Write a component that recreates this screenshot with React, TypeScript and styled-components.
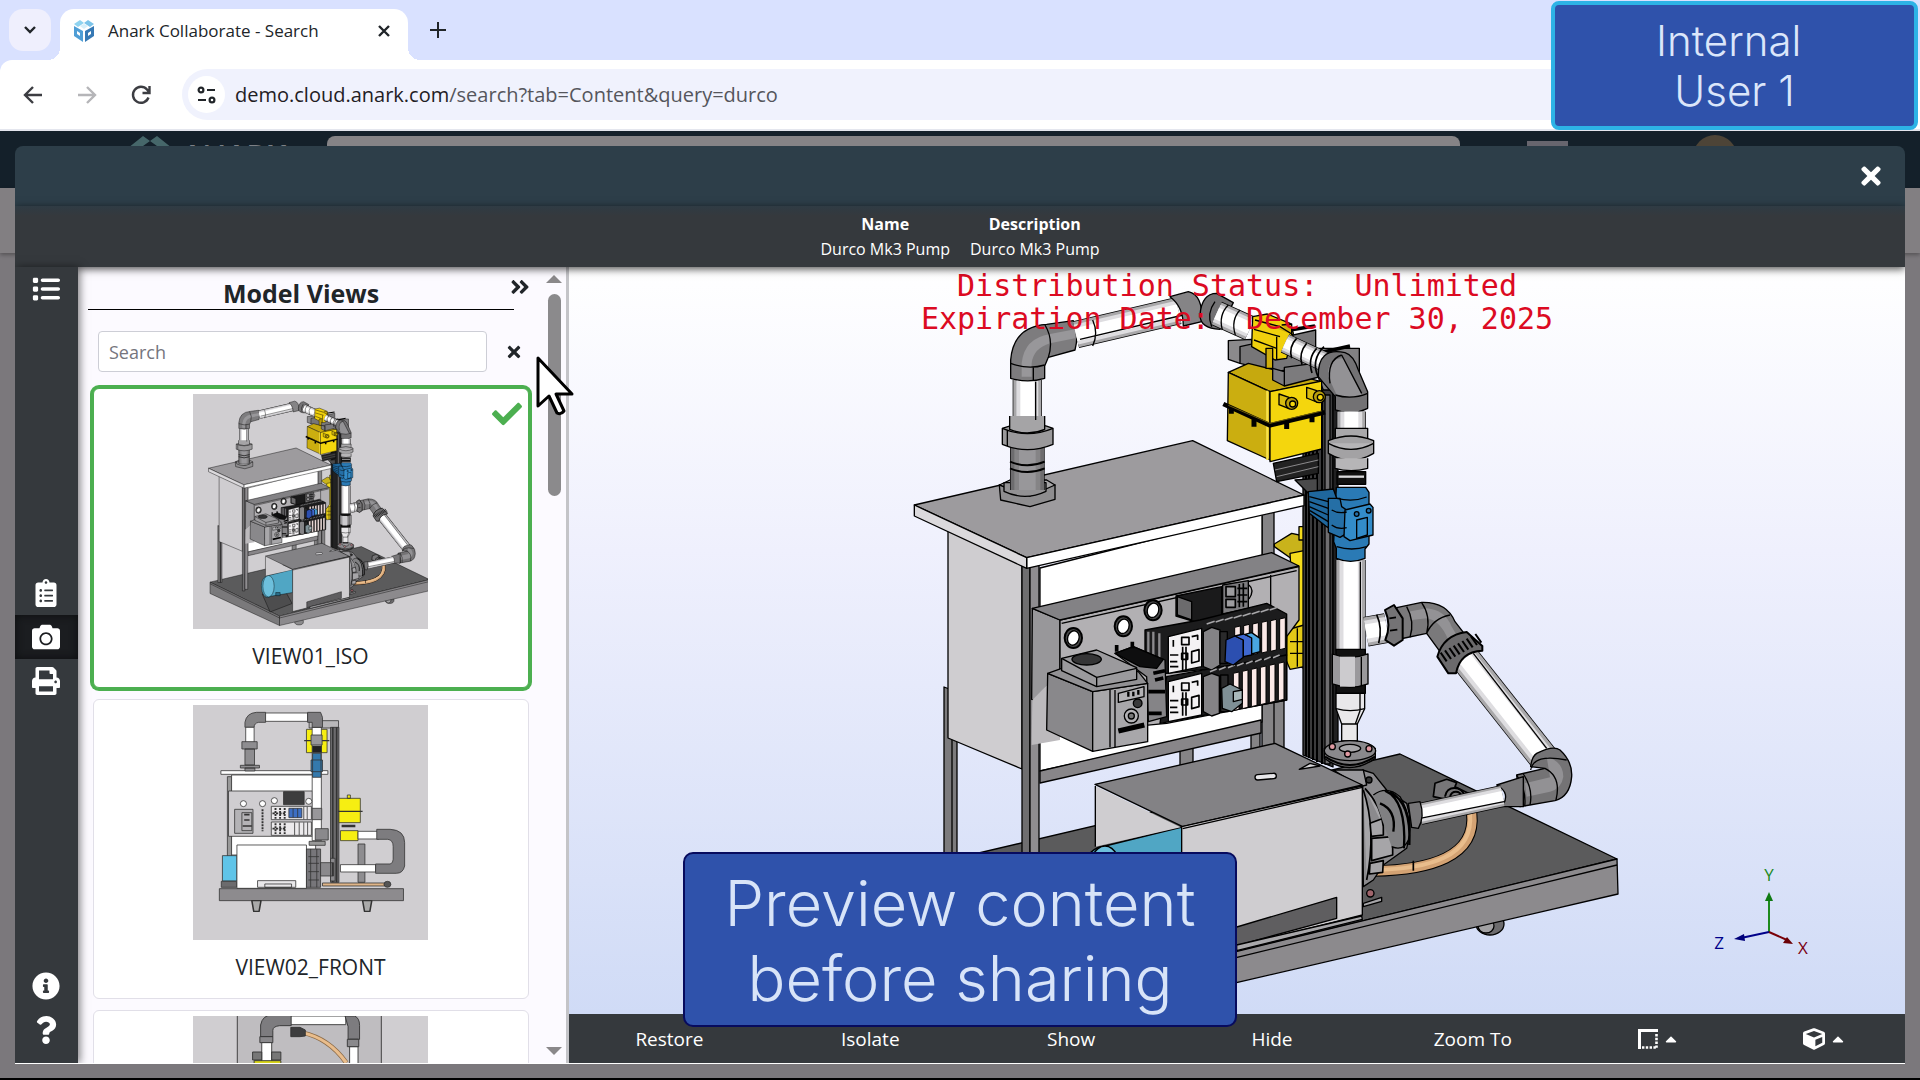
import React from "react";
import styled, { createGlobalStyle } from "styled-components";
import {
  FaAngleDoubleRight,
  FaCamera,
  FaCaretUp,
  FaCheck,
  FaClipboardList,
  FaCube,
  FaInfoCircle,
  FaPrint,
  FaQuestion,
  FaTimes,
} from "react-icons/fa";
import { FaList } from "react-icons/fa6";

const ui = `"Segoe UI", "Open Sans", "Noto Sans", sans-serif`;
const slate = "#35393d";

const Global = createGlobalStyle`
  *, *::before, *::after { box-sizing: border-box; }
  body { margin: 0; font-family: ${ui}; color: #212529; overflow: hidden; }
  button, input { font: inherit; color: inherit; }
  button { border: 0; padding: 0; background: none; cursor: pointer; }
  svg { display: block; flex: none; }
`;

/* ---------- browser chrome ---------- */

const Browser = styled.div`
  position: relative;
  display: flex;
  flex-direction: column;
  height: 100vh;
  background: #d9e1ff;
  border-bottom: 2px solid #000;
`;

const TabStrip = styled.div`
  display: flex;
  align-items: flex-start;
  height: 60px;
  padding: 9px 9px 0;
`;

const TabSearch = styled.button`
  display: grid;
  place-items: center;
  width: 42px;
  height: 42px;
  border-radius: 14px;
  background: #efeffd;
`;

const Tab = styled.div`
  position: relative;
  display: flex;
  align-items: center;
  gap: 13px;
  width: 348px;
  height: 51px;
  margin-left: 9px;
  padding: 0 17px 8px 13px;
  border-radius: 14px 14px 0 0;
  background: #fff;
  font-size: 17px;
  &::before, &::after {
    content: "";
    position: absolute;
    bottom: 0;
    width: 12px;
    height: 12px;
  }
  &::before { left: -12px; background: radial-gradient(circle at 0 0, transparent 12px, #fff 12px); }
  &::after { right: -12px; background: radial-gradient(circle at 100% 0, transparent 12px, #fff 12px); }
`;

const TabTitle = styled.span`
  flex: 1;
`;

const NewTab = styled.button`
  display: grid;
  place-items: center;
  width: 36px;
  height: 42px;
  margin-left: 12px;
`;

const Toolbar = styled.div`
  display: flex;
  align-items: center;
  height: 71px;
  padding: 0 20px;
  border-bottom: 2px solid #e4e6ee;
  border-radius: 12px 0 0 0;
  background: #fff;
`;

const NavButton = styled.button<{ $dim?: boolean }>`
  display: grid;
  place-items: center;
  width: 26px;
  height: 36px;
  margin-right: 28px;
  color: ${(p) => (p.$dim ? "#b5b5b8" : "#3c3d42")};
`;

const Omnibox = styled.div`
  display: flex;
  flex: 1;
  align-items: center;
  gap: 10px;
  height: 51px;
  padding: 0 6px;
  border-radius: 26px;
  background: #f0f2fd;
  font-size: 20px;
`;

const SiteInfo = styled.span`
  display: grid;
  place-items: center;
  width: 37px;
  height: 37px;
  border-radius: 50%;
  background: #fff;
`;

const Url = styled.span`
  color: #55565c;
  b { color: #1f2024; font-weight: 400; }
`;

/* ---------- dimmed page behind the dialog ---------- */

const Page = styled.div`
  position: relative;
  flex: 1;
  min-height: 0;
  overflow: hidden;
  background: #7b787c;
`;

const AppHeader = styled.div`
  display: grid;
  grid-template-columns: 327px minmax(0, 1133fr) 460fr;
  height: 57px;
  background: #14202a;
`;

const Brand = styled.div`
  display: flex;
  align-items: flex-start;
  gap: 10px;
  padding: 5px 0 0 128px;
  color: #7c8086;
  font: 700 30px/38px Lato, sans-serif;
  sup { font-size: 12px; line-height: 12px; vertical-align: 12px; }
`;

const AppSearch = styled.div`
  height: 46px;
  margin-top: 5px;
  border-radius: 8px;
  background: #858386;
`;

const AppActions = styled.div`
  display: flex;
  align-items: flex-start;
  gap: 125px;
  padding: 4px 0 0 67px;
`;

const ActionTile = styled.span`
  width: 41px;
  height: 30px;
  margin-top: 6px;
  background: #67656e;
`;

const Avatar = styled.span`
  width: 44px;
  height: 44px;
  border-radius: 50%;
  background: #4d4437;
`;

const SubHeader = styled.div`
  height: 65px;
  background: #827f82;
  box-shadow: 0 2px 4px rgba(0, 0, 0, 0.3);
`;

/* ---------- dialog ---------- */

const Dialog = styled.section`
  position: absolute;
  inset: 15px 15px 14px;
  display: flex;
  flex-direction: column;
  overflow: hidden;
  border-bottom: 1px solid #fff;
  border-radius: 8px 8px 0 0;
`;

const DialogTop = styled.header`
  display: flex;
  align-items: center;
  justify-content: flex-end;
  height: 60px;
  padding: 0 20px;
  background: #2d3e49;
`;

const CloseButton = styled.button`
  color: #fff;
  font-size: 28px;
`;

const InfoBar = styled.div`
  position: relative;
  z-index: 1;
  display: flex;
  justify-content: center;
  align-items: flex-start;
  height: 61px;
  padding-top: 6px;
  background: linear-gradient(#2f3b44, ${slate} 10px);
  box-shadow: 0 2px 8px rgba(0, 0, 0, 0.7);
`;

const InfoTable = styled.table`
  border-collapse: collapse;
  color: #fff;
  font-size: 16px;
  line-height: 25px;
  text-align: center;
  th, td { padding: 0 10px; }
`;

const Workspace = styled.div`
  display: flex;
  flex: 1;
  min-height: 0;
`;

const Rail = styled.nav`
  z-index: 1;
  display: flex;
  flex-direction: column;
  width: 63px;
  padding-bottom: 11px;
  background: ${slate};
  box-shadow: 2px 0 8px rgba(0, 0, 0, 0.5);
`;

const RailGroup = styled.div<{ $top?: string }>`
  display: flex;
  flex-direction: column;
  margin-top: ${(p) => p.$top ?? "0"};
`;

const RailButton = styled.button<{ $active?: boolean }>`
  display: grid;
  place-items: center;
  height: 44px;
  padding: 0 1px 1px 0;
  color: #fff;
  font-size: 28px;
  background: ${(p) => (p.$active ? "#1b1d20" : "transparent")};
  box-shadow: ${(p) => (p.$active ? "inset 0 0 8px #0c0d0f" : "none")};
`;

const Panel = styled.aside`
  display: grid;
  grid-template-columns: minmax(0, 1fr) 20px;
  width: 491px;
  overflow: hidden;
  border-right: 3px solid #c4c4c8;
  background: #fcfaff;
`;

const PanelBody = styled.div`
  min-width: 0;
  overflow: hidden;
  padding-left: 10px;
`;

const PanelHead = styled.div`
  display: flex;
  align-items: flex-start;
  height: 64px;
`;

const PanelTitle = styled.h2`
  width: 426px;
  height: 43px;
  margin: 0;
  border-bottom: 1px solid #000;
  font-size: 25px;
  font-weight: 700;
  line-height: 52px;
  text-align: center;
`;

const IconButton = styled.button`
  display: grid;
  place-items: center;
`;

const Collapse = styled(IconButton)`
  width: 17px;
  height: 40px;
  font-size: 22px;
  justify-content: end;
`;

const SearchRow = styled.div`
  display: flex;
  align-items: center;
  gap: 18px;
  padding-left: 10px;
`;

const SearchInput = styled.input`
  width: 389px;
  height: 41px;
  padding: 0 10px;
  border: 1px solid #cdced6;
  border-radius: 4px;
  background: #fff;
  font-size: 18px;
  outline: 0;
  &::placeholder { color: #75757d; opacity: 1; }
`;

const Cards = styled.div`
  display: flex;
  flex-direction: column;
  gap: 11px;
  padding: 16px 0 0 5px;
`;

const Card = styled.button<{ $selected?: boolean }>`
  position: relative;
  display: flex;
  flex: none;
  flex-direction: column;
  align-items: center;
  width: 436px;
  height: 300px;
  padding: 5px 1px 0 0;
  border: 1px solid ${(p) => (p.$selected ? "#4caf50" : "#e1dfe8")};
  border-radius: 6px;
  background: #fff;
  box-shadow: ${(p) => (p.$selected ? "0 0 0 3px #4caf50" : "none")};
`;

const Thumb = styled.span`
  width: 235px;
  height: 235px;
  overflow: hidden;
  background: #d0ced1;
`;

const CardLabel = styled.span`
  margin-top: 12px;
  font-size: 21px;
  line-height: 30px;
`;

const Tick = styled.span`
  position: absolute;
  top: 10px;
  right: 6px;
  color: #4caf50;
  font-size: 30px;
`;

const Scroll = styled.div`
  display: flex;
  flex-direction: column;
  align-items: center;
  padding: 8px 4px 8px 0;
`;

const Arrow = styled.i<{ $down?: boolean }>`
  border: solid transparent;
  border-width: ${(p) => (p.$down ? "8px 8px 0" : "0 8px 8px")};
  border-${(p) => (p.$down ? "top" : "bottom")}-color: #8a888a;
`;

const ScrollThumb = styled.div`
  width: 13px;
  height: 202px;
  margin: 11px 0 auto;
  border-radius: 7px;
  background: #8b8a8c;
`;

const Viewer = styled.main`
  display: flex;
  flex: 1;
  flex-direction: column;
  min-width: 0;
`;

const Canvas = styled.div`
  position: relative;
  flex: 1;
  min-height: 0;
  overflow: hidden;
  background: linear-gradient(#fff, #eff0fd 38%, #d0dbf6);
  > svg { width: 100%; height: 100%; }
`;

const Watermark = styled.p`
  position: absolute;
  inset: 2px 0 auto;
  margin: 0;
  color: #dc0a22;
  font: 30px/33px "DejaVu Sans Mono", monospace;
  text-align: center;
  white-space: pre;
`;

const ActionBar = styled.div`
  display: grid;
  grid-template-columns: repeat(5, 201fr) repeat(2, 166fr);
  height: 49px;
  background: ${slate};
`;

const Action = styled.button`
  display: flex;
  align-items: center;
  justify-content: center;
  gap: 4px;
  color: #fff;
  font-size: 19px;
`;

const MenuAction = styled(Action)`
  padding-left: 6px;
`;

/* ---------- overlays ---------- */

const Caption = styled.div`
  position: absolute;
  bottom: 51px;
  left: 50%;
  width: 554px;
  height: 175px;
  padding: 12px 0;
  transform: translateX(-50%);
  border: 2px solid #070b5e;
  border-radius: 10px;
  background: #2f52ab;
  color: #d8e4f8;
  font: 300 63px/75px Inter, sans-serif;
  text-align: center;
  white-space: pre;
`;

const UserBadge = styled.div`
  position: absolute;
  top: 1px;
  right: 2px;
  width: 367px;
  height: 129px;
  padding-top: 11px;
  border: 4px solid #2db3e6;
  border-radius: 8px;
  background: #2f52ab;
  color: #dbe6fa;
  font: 300 42px/50px Inter, sans-serif;
  text-align: center;
  white-space: pre;
`;

const Pointer = styled.svg`
  position: absolute;
  top: 354px;
  left: 534px;
`;

/* ---------- drawings ---------- */

type PipeProps = { d: string; w: number; dark?: boolean };

/* A shaded tube: outline, body, highlight. */
const Pipe = ({ d, w, dark }: PipeProps) => (
  <g fill="none" strokeLinejoin="round">
    <path d={d} stroke="#000" strokeWidth={w + 4} />
    <path d={d} stroke={dark ? "#6d6c6e" : "#a9a8aa"} strokeWidth={w} />
    <path d={d} stroke={dark ? "#858486" : "#dedde0"} strokeWidth={w * 0.78} />
    <path d={d} stroke={dark ? "#98979a" : "#fff"} strokeWidth={w * 0.5} />
  </g>
);

const range = (n: number) => Array.from({ length: n }, (_, i) => i);

const PumpModel = () => (
  <g stroke="#000" strokeWidth="1.3" strokeLinejoin="round">
    {/* skid */}
    <ellipse cx="1490" cy="924" rx="14" ry="11" fill="#6c6b6d" />
    <ellipse cx="1486" cy="926" rx="8" ry="7" fill="#a2a1a3" />
    <ellipse cx="1202" cy="993" rx="14" ry="10" fill="#8c8b8d" />
    <path d="M919 867 1400 754 1617 859 1140 975z" fill="#5b5b5c" />
    <path d="M1140 975 1617 859 1618 894 1140 1005z" fill="#8c8a8d" />
    <path d="M919 867 1140 975V1005L919 903z" fill="#7a797b" />
    <path d="M1140 981 1617 865M919 872 1140 981" fill="none" />

    {/* hose and end fitting */}
    <g transform="translate(1200 540) scale(.33333)" fill="none">
      <path d="M520 993C690 990 830 950 815 820" stroke="#000" strokeWidth="34" />
      <path d="M520 993C690 990 830 950 815 820" stroke="#d3a273" strokeWidth="28" />
      <path d="M520 990C690 987 822 950 810 820" stroke="#e9bd8c" strokeWidth="12" />
      <path d="M640 962v30M700 770l5-40 35-12 30 10-5 12 40 20-10 30z" fill="#777678" strokeWidth="5" />
      <path d="M735 770c5-35 50-35 60 0M750 770c5-20 30-20 36 0" strokeWidth="6" />
    </g>

    {/* cabinet frame and faces */}
    <path d="M944 687 952 690V868H944zM952 735h5v133h-5z" fill="#7c7b7d" />
    <path d="M1180 745h13v35h-13zM1251 730h9v30h-9zM1262 510h12v260h-12zM1274 690h10v80h-10z" fill="#858486" />
    <path d="M948 530V738L1022 769V562z" fill="#cfcdd0" />
    <path d="M1040 568 1262 512V722L1040 771z" fill="#fff" />
    <path d="M1040 771 1261 720V733L1040 783z" fill="#888689" />
    <path d="M1022 565h8V895h-8z" fill="#6f6e70" />
    <path d="M1030 565h9V890h-9z" fill="#8f8d90" />

    {/* rear yellow actuator */}
    <g transform="translate(1180 280) scale(.33333)" strokeWidth="4">
      <path d="M283 792 335 760 372 768V1165L340 1150V840L283 800z" fill="#c9b31b" />
      <path d="M330 820 372 812V1160L345 1160 345 1090z" fill="#f5dc1c" />
      <path d="M320 1050 372 1035V1160L330 1168 318 1140z" fill="#e3c917" />
      <path d="M357 740h18v40h-18zM330 1085h42M330 1120h42M352 1045v115" fill="#f5dc1c" />
    </g>

    {/* support extrusions */}
    <path d="M1303 385H1333V767L1303 755z" fill="#3b3b3c" />
    <path d="M1306 385V756M1309 385V758M1313 385V760M1317 385V762M1322 390V764" strokeWidth="2" />
    <path d="M1325 395h5v369h-5z" fill="#6f6e70" />
    <path d="M1333 385h5V742h-5z" fill="#202021" />

    {/* counter top */}
    <g transform="translate(900 260) scale(.33333)" strokeWidth="4">
      <path d="M43 735 878 542 1212 705 380 893z" fill="#9d9b9e" />
      <path d="M380 893 1212 705V737L380 925z" fill="#fff" />
      <path d="M43 735 380 893V925L43 768z" fill="#dbd9dc" />
    </g>

    {/* riser on the counter */}
    <g transform="translate(900 260) scale(.33333)" strokeWidth="4">
      <path d="M298 675 302 720 390 740 465 718V675z" fill="#8e8d8f" />
      <path d="M298 675 330 660H440L465 675 390 708z" fill="#a7a6a8" />
      <path d="M312 668h126v26q-63 30-126 0z" fill="#929193" />
      <Pipe d="M382 560V690" w={100} dark />
      <path d="M330 605q52 22 104 0M330 625q52 22 104 0" fill="none" strokeWidth="6" />
      <path d="M307 505v48q75 32 152 0v-48q-76-30-152 0z" fill="#9a999b" />
      <path d="M307 505q75 32 152 0M322 512v46" fill="none" />
      <Pipe d="M382 360V485" w={84} />
      <path d="M329 468v40q53 22 105 0v-40" fill="#a5a4a6" />
      <path d="M407 365V480" fill="none" />
      <path d="M332 355V300Q340 200 440 193L520 182Q538 220 525 270L445 292 434 318V355Q384 370 332 355z" fill="#7d7c7e" />
      <path d="M365 350V310Q372 235 450 222L525 208V235L450 250Q400 265 395 310V350z" fill="#98979a" stroke="none" />
      <path d="M332 310Q384 330 434 315M435 195Q462 240 445 292M400 360V320" fill="none" />
      <Pipe d="M528 224 835 152" w={78} />
      <path d="M540 238 850 165M578 180q18 40 0 78" fill="none" />
      <path d="M810 110 865 95Q910 105 905 185L850 198Q850 140 810 110z" fill="#858486" />
      <path d="M900 165Q905 100 950 100L1000 128 960 208Q900 205 900 165z" fill="#737274" />
      <Pipe d="M950 160 1050 205" w={72} />
      <path d="M985 135q-30 30-18 75M1020 150q-28 30-14 75M945 125q-26 35-10 75" fill="none" />
    </g>

    {/* upper valve, bracket and yellow actuator */}
    <g transform="translate(1180 280) scale(.33333)" strokeWidth="4">
      <path d="M145 182 215 178V205L180 250 145 238z" fill="#8b8a8c" />
      <path d="M180 200 407 150V260L280 275 180 250z" fill="#777678" />
      <path d="M380 205 538 205V330L430 330z" fill="#828183" />
      <path d="M330 150 405 138M390 225 510 198" strokeWidth="10" />
      <path d="M145 277 205 250 425 305 270 335z" fill="#c6a90e" />
      <path d="M145 277 270 335V540L142 482z" fill="#cbae10" />
      <path d="M270 335 425 303V507L270 545z" fill="#f4d60d" />
      <path d="M262 332V540" stroke="#f9e24a" strokeWidth="7" />
      <path d="M130 372 270 436 435 397" fill="none" strokeWidth="14" />
      <path d="M145 376 270 430 425 393" fill="none" stroke="#6a5a08" strokeWidth="3" />
      <path d="M154 385v16M222 418v22M320 425v22M396 405v22" strokeWidth="15" />
      {[[335, 370], [418, 350]].map(([x, y]) => (
        <g key={x}>
          <path d={`M${x - 38} ${y - 28}l30 10 v34l-30-12z`} fill="#d8bc10" />
          <circle cx={x} cy={y} r="18" fill="#b99e0c" />
          <circle cx={x + 3} cy={y + 2} r="9" fill="#f4d60d" />
        </g>
      ))}
      <path d="M278 265 313 275V318L278 300zM313 262 440 245V285L313 318z" fill="#7c7b7d" />
      <path d="M218 110 262 102 330 130 340 160 320 235 285 240 215 200z" fill="#f0d00d" />
      <path d="M225 120 300 140 340 165M222 148 300 170M222 180 290 205M290 170V240M305 135 335 132V165M258 205h20v60h-20z" fill="#cfae0c" />
      <Pipe d="M315 190 440 248" w={56} />
      <path d="M350 175q-25 25-15 60M380 190q-25 30-14 64M410 205q-28 30-14 74M432 200q-40 40-18 90" fill="none" strokeWidth="5" />
      <path d="M280 550 415 520V580L290 605z" fill="#222" />
      <path d="M285 570 415 540M290 590 415 560" stroke="#8b8a8c" strokeWidth="3" />
      <path d="M345 600 385 640 412 635V595z" fill="#4a4a4b" />
    </g>

    {/* main vertical line */}
    <g transform="translate(1180 280) scale(.33333)" strokeWidth="4">
      <path d="M415 290Q412 200 495 218 520 225 535 270L563 335V385Q515 408 466 390V350L440 320z" fill="#737274" />
      <path d="M445 290Q440 235 490 235L545 345Q515 355 470 345z" fill="#939295" stroke="none" />
      <path d="M485 225 545 340M466 345Q515 360 563 340M450 310Q440 240 485 225" fill="none" />
      <Pipe d="M514 395V460" w={84} />
      <path d="M466 445h97v40h-97z" fill="#a9a8aa" />
      <path d="M445 482v38q68 40 136 0v-38q-68-28-136 0z" fill="#a3a2a4" />
      <path d="M445 490q68 36 136 0M465 535v30q48 14 98 0v-30" fill="#b6b5b7" />
      <path d="M471 575h86v38h-86z" fill="#111" />
      <path d="M476 590h76" stroke="#d9d9db" strokeWidth="7" />
      <Pipe d="M512 840V1112" w={86} />
      <path d="M541 845V1110" fill="none" />
      <path d="M469 622h88l10 15v155l-12 15v28q-43 18-86 0v-30l-8-20z" fill="#2a7ab5" />
      <path d="M385 635 460 627 470 655V760L440 740 388 700z" fill="#1f679d" />
      <path d="M388 650 445 665M388 665 445 685M388 680 445 705M390 692 445 725" fill="none" />
      <path d="M445 655h35l5 25 15 10v70l-20 12-35-15z" fill="#256fa6" />
      <path d="M495 690 570 672 579 682V765L510 782 492 770z" fill="#338cc9" />
      <path d="M530 720 562 712V765L530 775zM455 690q20 12 45 6M455 735q20 15 45 8M470 655q50 12 90-4M470 800q45 14 90 0" fill="none" />
      <circle cx="530" cy="702" r="7" fill="#256fa6" />
      <circle cx="566" cy="692" r="7" fill="#256fa6" />
    </g>

    {/* control panel */}
    <g transform="translate(900 540) scale(.33333)" strokeWidth="4">
      <path d="M397 205 480 240V395L405 480 395 478z" fill="#98979a" />
      <path d="M397 480 480 395V600L395 615z" fill="#bcbabd" stroke="none" />
      <path d="M480 240 1197 80V240L1160 290V480L800 550 480 580z" fill="#b2b0b3" />
      <path d="M397 205 1115 38 1197 78 480 240z" fill="#838285" />
      <path d="M485 250 1190 92M1112 105V200" fill="none" />
      {[[520, 294], [670, 259], [759, 211]].map(([x, y]) => (
        <g key={x}>
          <ellipse cx={x} cy={y} rx="26" ry="30" fill="#4a4a4b" strokeWidth="6" />
          <ellipse cx={x} cy={y} rx="17" ry="22" fill="#fff" transform={`rotate(18 ${x} ${y})`} />
        </g>
      ))}
      <path d="M828 168 965 140V250H900L828 228z" fill="#1a1a1b" />
      <path d="M832 170 875 185V240L832 225z" fill="#6c6b6d" />
      <path d="M968 135 1045 122V205L968 222z" fill="#7e7d80" />
      <path d="M978 140h28v30h-28zM978 178h28v24h-28zM1018 132v70M1030 130v70M1012 145h30M1012 165h30M1012 185h30" fill="#9d9c9f" strokeWidth="5" />
      <path d="M1047 135q18 15 0 42" fill="none" />
      {/* terminal rows */}
      <path d="M735 270 900 240 1100 190 1160 222V345L1080 370 800 400 735 380z" fill="#1c1c1d" />
      <path d="M800 410 1160 345V480L780 550z" fill="#1c1c1d" />
      <path d="M745 275v75M760 275v80M778 280v90" stroke="#8c8b8e" strokeWidth="7" />
      <path d="M805 290 905 265V380L805 400zM805 425 905 400V525L805 545z" fill="#f4f2f4" />
      {range(2).map((r) => (
        <g key={r} transform={`translate(0 ${r * 137})`} strokeWidth="5">
          <path d="M820 300v20M845 292h22v22h-22zM845 340h18v18h-18zM875 290l18-4v14M875 335l22-6v34l-22 6zM810 345h25M810 365h22M810 380h25M848 320v70M858 320v70" fill="none" />
        </g>
      ))}
      <path d="M910 275 935 262 960 270V375L935 390 910 380zM910 410 935 400 958 408V520L935 528 910 515z" fill="#848386" />
      <path d="M960 275h22v95h-22zM962 405h22v110h-22z" fill="#2a2a2b" />
      {range(6).map((i) => (
        <g key={i} fill="#fbe9e7" strokeWidth="3">
          <path d={`M${1004 + i * 27} ${262 - i * 5}l17-4v${92}l-17 4z`} />
          <path d={`M${1000 + i * 27} ${400 - i * 6}l17-4v${112}l-17 4z`} />
        </g>
      ))}
      {range(8).map((i) => (
        <path key={i} d={`M${920 + i * 27} ${252 - i * 6}l24-8M${930 + i * 27} ${395 - i * 6}l20-8`} stroke="#a7a6a9" strokeWidth="5" />
      ))}
      <path d="M978 300 1005 288 1030 300V352L1000 375 975 365z" fill="#2c4fb0" />
      <path d="M1005 288 1030 282 1055 292V345L1030 350V300z" fill="#3f68d0" />
      <path d="M1035 283 1055 278 1080 295V335L1055 342V294z" fill="#49a5e0" />
      <path d="M965 445 990 432 1027 450V490L995 515 967 505z" fill="#7f9096" />
      <path d="M1000 455 1027 450V478L1000 485z" fill="#a9b9bb" />
      {/* breakers */}
      <path d="M645 340 700 320 795 360 800 530 745 545 740 410z" fill="#858487" />
      <path d="M645 340 700 320 790 358 770 385 720 380z" fill="#0e0e0f" />
      <path d="M650 315v20M697 305v20M745 455h50M745 520h40M760 400l35-8M765 420l25-6" fill="none" strokeWidth="11" />
      {/* isolator box */}
      <path d="M443 400 578 455V634L440 570z" fill="#89888b" />
      <path d="M578 455 743 430V605L645 622 578 634z" fill="#a8a7aa" />
      <path d="M443 400 485 385 715 395 743 430 578 455z" fill="#929194" />
      <path d="M485 355 590 330 710 383V418L590 440 485 392z" fill="#9b9a9d" />
      <path d="M485 355 590 412 710 385M590 412V440M630 450V622M645 450V622" fill="none" />
      <ellipse cx="560" cy="358" rx="44" ry="17" fill="#353536" />
      <path d="M655 460 732 440V470L655 487z" fill="#b3b2b5" />
      <path d="M685 470v-15M700 455v14M715 450v14" strokeWidth="7" />
      <circle cx="713" cy="490" r="13" fill="#39393a" />
      <circle cx="694" cy="528" r="21" fill="#b3b2b5" />
      <circle cx="694" cy="528" r="9" fill="#777" />
      <path d="M655 573 733 555" strokeWidth="16" />
    </g>

    {/* discharge branch */}
    <g transform="translate(1200 540) scale(.33333)" strokeWidth="4">
      <Pipe d="M498 275 560 264" w={86} />
      <path d="M590 203 665 187Q740 185 765 245L800 290 720 335 680 280 600 297z" fill="#7a797b" />
      <path d="M555 210 582 195 608 235V300L582 317 556 300Q575 255 555 210z" fill="#747375" strokeWidth="6" />
      <path d="M568 235l20-3M570 272l22-3M530 224q18 40 6 86" fill="none" strokeWidth="5" />
      <path d="M625 215 680 205Q735 210 755 260L770 285 745 300Q720 240 680 235L635 240z" fill="#939295" stroke="none" />
      <path d="M620 200q25 45 10 92M665 188q28 40 15 92Q700 235 750 225" fill="none" />
      <Pipe d="M795 355 1032 655" w={86} />
      <path d="M820 340 1040 625" fill="none" />
      <path d="M712 350Q730 285 800 276L847 318V332Q780 335 768 400H745z" fill="#6b6a6c" strokeWidth="6" />
      {range(9).map((i) => (
        <path key={i} d={`M${722 + i * 13} ${338 - i * 7}l18 26`} strokeWidth="6" />
      ))}
      <path d="M1010 640Q1060 615 1080 630 1118 665 1115 710 1110 770 1065 782L960 800 950 705 1035 685 992 680Q995 650 1010 640z" fill="#747375" />
      <path d="M1040 650Q1090 665 1090 710 1085 745 1050 755L980 770 975 730 1050 712z" fill="#929194" stroke="none" />
      <path d="M992 690Q1000 640 1100 660M1035 685Q1085 710 1068 780M970 702q30 45 20 93M950 705q30 45 24 94" fill="none" />
      <path d="M890 735 970 710V800L905 800Q935 760 890 735z" fill="#777678" />
      <Pipe d="M660 822 908 768" w={62} />
      <path d="M660 835 912 785" fill="none" />
    </g>

    {/* reducer, flange and pump volute */}
    <g transform="translate(1200 540) scale(.33333)" strokeWidth="4">
      <path d="M408 328h88v32h-88zM408 435h88v25h-88z" fill="#111" />
      <path d="M397 342q53 20 107 0v90q-53 20-107 0z" fill="#9a999c" />
      <path d="M420 350h45v90h-45z" fill="#cccbce" stroke="none" />
      <path d="M484 350v88" />
      <path d="M408 460h86v46L472 552V605H425V552L408 506z" fill="#e9e8ea" />
      <path d="M408 506q43 12 86 0M425 552h47M480 462v50l-14 40" fill="none" />
      <path d="M425 603h48v12h-48z" fill="#111" />
      <path d="M488 690 520 700 560 750 620 790Q640 850 620 925L550 975 520 1020 490 1040z" fill="#8b8a8d" />
      <path d="M495 745Q545 800 550 860M490 750Q530 870 500 1020M510 850l40-15v50l-36 4zM515 895 578 890V945L515 962zM510 970l40-8-2 35-40 5z" fill="#a6a5a8" strokeWidth="5" />
      <path d="M520 765Q560 735 600 770 640 840 625 900 610 935 575 920" fill="#808082" />
      <path d="M555 752Q620 780 612 925M540 790q50 20 40 85M570 755Q635 790 628 915" fill="none" strokeWidth="7" />
      <path d="M625 790 660 785Q675 830 655 865L635 862z" fill="#777678" />
      <path d="M373 625v30q75 55 153 0v-30z" fill="#767577" />
      <ellipse cx="450" cy="632" rx="77" ry="30" fill="#8a898c" />
      <path d="M375 650q75 50 150 0" fill="none" strokeWidth="6" />
      <ellipse cx="450" cy="625" rx="32" ry="12" fill="#a7a6a9" />
      {[[397, 620], [443, 642], [507, 626]].map(([x, y]) => (
        <circle key={x} cx={x} cy={y} r="9" fill="#e09aa2" />
      ))}
      <path d="M400 690 490 690 500 735 480 740z" fill="#99989b" />
      <circle cx="507" cy="720" r="9" fill="#333" />
    </g>

    {/* motor guard and motor */}
    <path d="M1085 905 1150 880 1180 935 1110 962z" fill="#4d4d4e" />
    <path d="M1105 846C1080 848 1078 885 1088 905 1094 918 1106 918 1112 912L1182 900V827z" fill="#50a6c4" />
    <ellipse cx="1105" cy="880" rx="18" ry="34" fill="#6dbfdc" />
    <path d="M1128 900h14v10h-14z" fill="#2a6b86" />
    <g transform="translate(900 540) scale(.33333)" strokeWidth="4">
      <path d="M586 738V920L842 862z" fill="#cfcdd0" stroke="none" />
      <path d="M586 738V920" />
      <path d="M585 733 1125 610 1387 735 848 860z" fill="#838285" />
      <path d="M845 860 1387 738V1125L845 1262z" fill="#cfcdd0" />
      <path d="M848 866 1387 742" fill="none" />
      <path d="M980 1170 1310 1072V1135L980 1225z" fill="#5f5e60" />
      <rect x="1065" y="702" width="64" height="16" rx="8" fill="#e8e7ea" transform="rotate(-5 1097 710)" />
      <path d="M1198 688 1230 670 1260 678z" fill="#d8d7da" />
      <path d="M1390 1090 1445 1072V1084L1390 1100z" fill="#a5a4a7" />
      <circle cx="1411" cy="1060" r="11" fill="#a0656c" />
      <path d="M1010 1215 1385 1128 1387 1138 1010 1232z" fill="#a9a8ab" />
    </g>
  </g>
);

const AxisTriad = () => (
  <g fontFamily="Open Sans, sans-serif" fontSize="17" textAnchor="middle">
    <path d="M1769 932V900" stroke="#1d8a1d" strokeWidth="2" />
    <path d="m1769 892 4 9h-8z" fill="#0f7a12" />
    <path d="m1769 932-28 6" stroke="#00008a" strokeWidth="2" />
    <path d="m1734 939 10-5 1 7z" fill="#00007a" />
    <path d="m1769 932 18 8" stroke="#7a0008" strokeWidth="2" />
    <path d="m1793 944-10-1 4-6z" fill="#6a0006" />
    <text x="1769" y="881" fill="#1d8a1d">Y</text>
    <text x="1719" y="949" fill="#00008a">Z</text>
    <text x="1803" y="954" fill="#7a0012">X</text>
  </g>
);

const FrontThumb = () => (
  <svg width="235" height="235" viewBox="0 0 235 235">
    <g transform="scale(.382 .3333) translate(-504 -75)" stroke="#333" strokeWidth="2.2" strokeLinejoin="round">
      <path d="M808 122h77v22h-77z" fill="#b9b8ba" />
      <path d="M864 142h22v465h-22z" fill="#6c6b6d" />
      <path d="M870 142v465M880 142v465" strokeWidth="4" />
      <path d="M594 290h11v240h-11z" fill="#999" />
      <path d="M605 285h220v240H605z" fill="#fff" />
      <path d="M577 272h280v11H577z" fill="#fff" />
      <path d="M597 333h220v136H597z" fill="#cfcdd0" />
      <path d="M640 142v-15q4-28 30-30h24v30h-18q-12 2-12 15z" fill="#858486" />
      <path d="M694 99h110v25H694z" fill="#fff" />
      <path d="M642 142h22v45h-22z" fill="#fff" />
      <path d="M632 185h40v22h-40zM640 207h25v48h-25zM628 256h50v8h-50zM640 264h26v9h-26z" fill="#8e8d90" />
      <path d="M801 148h54v70h-54zM886 355h56v73h-56zM908 345h8v10h-8zM890 452h46v30h-46z" fill="#f6ee12" />
      <path d="M795 182h66M884 394h64M893 436h36M893 440h36" strokeWidth="4" />
      <path d="M816 142h24v340h-24z" fill="#fff" />
      <path d="M804 97h34l5 15v30h-27v-15h-12z" fill="#7d7c7f" />
      <path d="M813 165h29v30h-29zM816 385h25v34h-25z" fill="#98979a" />
      <path d="M817 198h23v20h-23z" fill="#222" />
      <path d="M817 220h22v72h-22zM813 240h30v35h-30z" fill="#3479ac" />
      {[[636, 371], [686, 371], [717, 362], [807, 364]].map(([x, y]) => (
        <ellipse key={x} cx={x} cy={y} rx="8" ry="9" fill="#fff" />
      ))}
      <path d="M741 335h54v39h-54z" fill="#3d3d3e" />
      <path d="M709 379h105v40H709zM709 426h105v40H709z" fill="#eceaec" />
      <path d="M720 384v32M732 384v32M744 384v32M720 430v32M732 430v32M744 430v32M712 400h36M712 446h36M686 388v66" strokeWidth="5" strokeDasharray="6 3" />
      <path d="M755 385h34v28h-34z" fill="#3d6fc4" />
      <path d="M766 385v28M778 385v28M794 380v38M803 380v38M770 427v38M782 427v38M794 427v38M804 427v38" />
      <path d="M613 388h48v72h-48zM632 398h26v54h-26z" fill="#b4b3b6" />
      <path d="M638 404h14M638 420h14M634 438h24" strokeWidth="5" />
      <path d="M581 527h38v76h-38z" fill="#5fc4e8" />
      <path d="M578 604h40v18h-40z" fill="#6c6b6d" />
      <path d="M619 495h182v130H619z" fill="#fff" />
      <path d="M673 602h100v20H673zM692 612h70v10h-70z" fill="#e9e8ea" />
      <path d="M801 507h37v115h-37z" fill="#77767a" />
      <path d="M806 530h28M806 550h28M806 575h28M806 600h28M812 507v115M828 507v115M808 484h42v12h-42z" fill="#999" />
      <path d="M824 446h34v34h-34zM838 548h34v40h-34zM864 535v68h12v-68z" fill="#8a898c" />
      <path d="M936 492h18v115h-18z" fill="#8e8d90" />
      <path d="M936 454h55v23h-55zM890 554h92v22h-92z" fill="#fff" />
      <path d="M985 448h35q38 2 38 40v70q-4 22-22 22h-54v-28h38q8-2 8-14v-38q0-20-14-22h-29z" fill="#7d7c7f" />
      <path d="M843 609h162v9H843z" fill="#e0b588" />
      <circle cx="1013" cy="613" r="9" fill="#555" />
      <path d="M573 626h482v36H573z" fill="#8d8b8e" />
      <path d="M658 662h24l-5 32h-14zM948 662h24l-5 32h-14z" fill="#aaa" strokeWidth="4" />
    </g>
  </svg>
);

const RearThumb = () => (
  <svg width="235" height="235" viewBox="0 0 235 235">
    <g transform="scale(.382 .3333) translate(-504 -1008)" stroke="#333" strokeWidth="2.5">
      <path d="M620 1000h377v700H620z" fill="#bfbdc0" />
      <path d="M744 1008h160v26H744z" fill="#fff" />
      <path d="M681 1070v-35q5-30 30-30h50v32h-30q-18 2-18 14v19zM902 1008h25q13 6 13 28v42h-30v-38z" fill="#7d7c7f" />
      <path d="M679 1070h34v18h-34z" fill="#8a898c" />
      <path d="M684 1088h26v60h-26zM914 1078h22v200h-22zM914 1100h22" fill="#fff" />
      <path d="M908 1078h30v22h-30z" fill="#8a898c" />
      <path d="M660 1116h24v24h-24zM710 1116h24v24h-24z" fill="#777" />
      <path d="M664 1142h70v80h-70z" fill="#d8d418" />
      <path d="M790 1058Q860 1075 905 1148" fill="none" stroke="#8d6c48" strokeWidth="13" />
      <path d="M790 1058Q860 1075 905 1148" fill="none" stroke="#e9bd8c" strokeWidth="9" />
      <path d="M760 1042h24l14 8v18l-14 2h-24z" fill="#3d3d3e" />
    </g>
  </svg>
);

const CubeLogo = () => (
  <svg width="22" height="24" viewBox="0 0 22 24">
    <path d="M1 5 7 1l4 3-6 4z" fill="#8fd3f0" />
    <path d="m21 5-6-4-4 3 6 4z" fill="#7cc4ea" />
    <path d="M1 7l9 5v11l-9-6z" fill="#4f9ed6" />
    <path d="m21 7-9 5v11l9-6z" fill="#3679b5" />
    <path d="m4 12 3 2v3l-3-2zM18 12l-3 2v3l3-2z" fill="#fff" />
    <path d="m11 5 4 2-4 3-4-3z" fill="#d6effa" />
  </svg>
);

const BrandMark = () => (
  <svg width="44" height="44" viewBox="0 0 44 44">
    <path d="M0 12 15 0l7 5L8 15zM44 12 29 0l-7 5 14 10z" fill="#46676a" />
    <path d="M0 16 20 27v17L0 32zM44 16 24 27v17l20-12z" fill="#46676a" />
  </svg>
);

const line = { fill: "none", stroke: "currentColor", strokeWidth: 2.4 } as const;

const SelectIcon = () => (
  <svg width="20" height="20" viewBox="0 0 20 20" fill="none" stroke="#fff">
    <path d="M1.5 20V1.5H20" strokeWidth="3" />
    <path d="M18.5 5v14M4 18.5h15" strokeWidth="2.6" strokeDasharray="2.4 1.4" />
  </svg>
);

const actions = ["Restore", "Isolate", "Show", "Hide", "Zoom To"];

export default function App() {
  return (
    <Browser>
      <Global />
      <TabStrip>
        <TabSearch aria-label="Search tabs">
          <svg width="14" height="10" viewBox="0 0 14 10" {...line}><path d="m2 2 5 5 5-5" /></svg>
        </TabSearch>
        <Tab>
          <CubeLogo />
          <TabTitle>Anark Collaborate - Search</TabTitle>
          <IconButton aria-label="Close tab">
            <svg width="14" height="14" viewBox="0 0 14 14" {...line}><path d="m2 2 10 10M12 2 2 12" /></svg>
          </IconButton>
        </Tab>
        <NewTab aria-label="New tab">
          <svg width="16" height="16" viewBox="0 0 16 16" {...line} strokeWidth={2}><path d="M8 0v16M0 8h16" /></svg>
        </NewTab>
      </TabStrip>
      <Toolbar>
        <NavButton aria-label="Back">
          <svg width="20" height="18" viewBox="0 0 20 18" {...line}><path d="M19 9H3M10 1 2 9l8 8" /></svg>
        </NavButton>
        <NavButton $dim aria-label="Forward">
          <svg width="20" height="18" viewBox="0 0 20 18" {...line}><path d="M1 9h16M10 1l8 8-8 8" /></svg>
        </NavButton>
        <NavButton aria-label="Reload">
          <svg width="20" height="20" viewBox="0 0 20 20" {...line}>
            <path d="M17.5 12.500A8 8 0 1 1 16 4.500L18 7M18.500 1v7h-7" />
          </svg>
        </NavButton>
        <Omnibox>
          <SiteInfo>
            <svg width="20" height="18" viewBox="0 0 20 18" {...line} strokeWidth={2.2}>
              <circle cx="4" cy="4" r="2.400" /><path d="M10 4h8M1 14h8" /><circle cx="15" cy="14" r="2.400" />
            </svg>
          </SiteInfo>
          <Url><b>demo.cloud.anark.com</b>/search?tab=Content&amp;query=durco</Url>
        </Omnibox>
      </Toolbar>

      <Page>
        <AppHeader>
          <Brand><BrandMark /><span>ANARK<sup>®</sup></span></Brand>
          <AppSearch />
          <AppActions><ActionTile /><Avatar /></AppActions>
        </AppHeader>
        <SubHeader />

        <Dialog aria-label="Content preview">
          <DialogTop>
            <CloseButton aria-label="Close"><FaTimes /></CloseButton>
          </DialogTop>
          <InfoBar>
            <InfoTable>
              <thead><tr><th>Name</th><th>Description</th></tr></thead>
              <tbody><tr><td>Durco Mk3 Pump</td><td>Durco Mk3 Pump</td></tr></tbody>
            </InfoTable>
          </InfoBar>
          <Workspace>
            <Rail>
              <RailGroup>
                <RailButton aria-label="Tree"><FaList /></RailButton>
              </RailGroup>
              <RailGroup $top="260px">
                <RailButton aria-label="Properties"><FaClipboardList /></RailButton>
                <RailButton $active aria-label="Model views"><FaCamera /></RailButton>
                <RailButton aria-label="Print"><FaPrint /></RailButton>
              </RailGroup>
              <RailGroup $top="auto">
                <RailButton aria-label="Info"><FaInfoCircle /></RailButton>
                <RailButton aria-label="Help"><FaQuestion /></RailButton>
              </RailGroup>
            </Rail>

            <Panel>
              <PanelBody>
                <PanelHead>
                  <PanelTitle>Model Views</PanelTitle>
                  <Collapse aria-label="Collapse panel"><FaAngleDoubleRight /></Collapse>
                </PanelHead>
                <SearchRow>
                  <SearchInput aria-label="Search views" placeholder="Search" />
                  <IconButton aria-label="Clear search"><FaTimes size={18} /></IconButton>
                </SearchRow>
                <Cards>
                  <Card $selected>
                    <Thumb>
                      <svg width="235" height="235" viewBox="865 269 747 747"><PumpModel /></svg>
                    </Thumb>
                    <CardLabel>VIEW01_ISO</CardLabel>
                    <Tick><FaCheck /></Tick>
                  </Card>
                  <Card>
                    <Thumb><FrontThumb /></Thumb>
                    <CardLabel>VIEW02_FRONT</CardLabel>
                  </Card>
                  <Card>
                    <Thumb><RearThumb /></Thumb>
                  </Card>
                </Cards>
              </PanelBody>
              <Scroll>
                <Arrow />
                <ScrollThumb />
                <Arrow $down />
              </Scroll>
            </Panel>

            <Viewer>
              <Canvas>
                <svg viewBox="569 267 1336 747">
                  <PumpModel />
                  <AxisTriad />
                </svg>
                <Watermark>{"Distribution Status:  Unlimited\nExpiration Date:  December 30, 2025"}</Watermark>
              </Canvas>
              <ActionBar>
                {actions.map((a) => <Action key={a}>{a}</Action>)}
                <MenuAction aria-label="Selection mode"><SelectIcon /><FaCaretUp size={18} /></MenuAction>
                <MenuAction aria-label="Display mode"><FaCube size={22} /><FaCaretUp size={18} /></MenuAction>
              </ActionBar>
            </Viewer>
          </Workspace>
        </Dialog>
      </Page>

      <Caption>{"Preview content\nbefore sharing"}</Caption>
      <UserBadge>{"Internal \nUser 1"}</UserBadge>
      <Pointer width="44" height="64" viewBox="0 0 44 64">
        <path d="M4 4v48l11-10 8 17q4 2 7-2l-8-17h16z" fill="#fff" stroke="#000" strokeWidth="3" strokeLinejoin="round" />
      </Pointer>
    </Browser>
  );
}
